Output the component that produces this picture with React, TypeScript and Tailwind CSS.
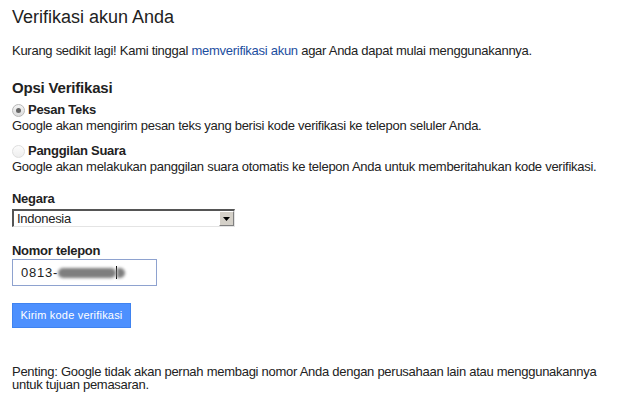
import React from 'react';

const Radio: React.FC<{ checked?: boolean }> = ({ checked }) => (
  <span
    className={`flex items-center justify-center w-[13px] h-[13px] rounded-full border shrink-0 ${
      checked
        ? 'border-[#b8b8b8] bg-gradient-to-b from-[#f4f4f4] to-[#dcdcdc]'
        : 'border-[#dedede] bg-gradient-to-b from-[#fcfcfc] to-[#eeeeee]'
    }`}
  >
    {checked && <span className="w-[5px] h-[5px] rounded-full bg-[#666]" />}
  </span>
);

const App: React.FC = () => {
  return (
    <div
      className="min-h-screen bg-white text-[#222] px-[12px] pt-[5px]"
      style={{ fontFamily: "Arial, 'Liberation Sans', sans-serif" }}
    >
      {/* Header */}
      <h1 className="text-[18px] leading-[24px] font-normal">Verifikasi akun Anda</h1>
      <p className="mt-[14px] text-[13px] leading-[16px] tracking-[-0.27px]">
        Kurang sedikit lagi! Kami tinggal{' '}
        <a className="text-[#1c4ea0]">memverifikasi akun</a> agar Anda dapat mulai menggunakannya.
      </p>

      {/* Options */}
      <h2 className="mt-[20px] text-[15px] leading-[18px] font-bold tracking-[-0.2px]">Opsi Verifikasi</h2>
      <label className="mt-[5px] flex items-center gap-[3px] text-[13px] leading-[16px] font-bold tracking-[-0.27px]">
        <Radio checked />
        Pesan Teks
      </label>
      <p className="text-[13px] leading-[16px] tracking-[-0.27px]">
        Google akan mengirim pesan teks yang berisi kode verifikasi ke telepon seluler Anda.
      </p>
      <label className="mt-[9px] flex items-center gap-[3px] text-[13px] leading-[16px] font-bold tracking-[-0.27px]">
        <Radio />
        Panggilan Suara
      </label>
      <p className="text-[13px] leading-[16px] tracking-[-0.27px]">
        Google akan melakukan panggilan suara otomatis ke telepon Anda untuk memberitahukan kode verifikasi.
      </p>

      {/* Country */}
      <div className="mt-[16px] text-[13px] leading-[16px] font-bold tracking-[-0.27px]">Negara</div>
      <div className="mt-[2px] flex w-[223px] h-[18px] border-t-2 border-l-2 border-t-[#555] border-l-[#555] border-b border-r border-b-[#e4e4e4] border-r-[#e4e4e4] bg-white">
        <span className="flex-1 pl-[3px] text-[13px] leading-[15px] tracking-[-0.27px]">Indonesia</span>
        <span className="flex items-center justify-center w-[15px] h-[15px] bg-[#d4d0c8] border border-t-white border-l-white border-b-[#808080] border-r-[#808080]">
          <svg width="7" height="4" viewBox="0 0 7 4">
            <path d="M0 0h7L3.5 4z" fill="#000" />
          </svg>
        </span>
      </div>

      {/* Phone */}
      <div className="mt-[16px] text-[13px] leading-[16px] font-bold tracking-[-0.27px]">Nomor telepon</div>
      <div className="flex items-center w-[145px] h-[27px] border border-[#8ea2cf] pl-[8px] text-[13px]">
        <span className="tracking-[0.8px]">0813-</span>
        <span className="inline-block w-[58px] h-[10px] bg-[#7e7e7e] rounded-full blur-[1.5px]" />
        <span className="inline-block w-px h-[13px] bg-black" />
        <span className="inline-block w-[8px] h-[10px] bg-[#7e7e7e] rounded-r-full blur-[1.5px]" />
      </div>

      <button className="mt-[17px] block w-[119px] h-[25px] bg-[#4d90fe] border border-[#3f83f0] text-white text-[11px] tracking-[0.2px]">
        Kirim kode verifikasi
      </button>

      <p className="mt-[37px] w-[596px] text-[13px] leading-[13px] tracking-[-0.27px]">
        Penting: Google tidak akan pernah membagi nomor Anda dengan perusahaan lain atau menggunakannya untuk tujuan pemasaran.
      </p>
    </div>
  );
};

export default App;
